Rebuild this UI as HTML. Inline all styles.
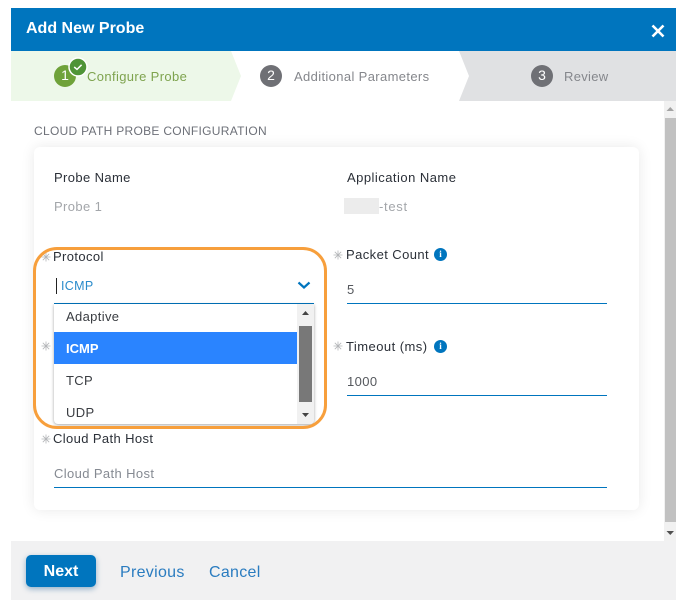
<!DOCTYPE html>
<html>
<head>
<meta charset="utf-8">
<style>
html,body{margin:0;padding:0;background:#fff;}
#p{position:relative;width:686px;height:607px;overflow:hidden;background:#fff;font-family:"Liberation Sans",sans-serif;font-size:13px;color:#2b3038;}
.a{position:absolute;white-space:nowrap;}
.t{position:absolute;white-space:nowrap;line-height:16px;letter-spacing:.38px;}
.ln{position:absolute;height:1px;background:#0075be;}
.circ{position:absolute;width:22px;height:22px;border-radius:50%;background:#6f7075;color:#fff;text-align:center;line-height:21px;font-size:14px;}
.star{position:absolute;width:10px;height:10px;}
.info{position:absolute;width:13px;height:13px;border-radius:50%;background:#0075be;color:#fff;font:bold 9px/13px "Liberation Serif",serif;text-align:center;}
.opt{position:absolute;left:12px;line-height:16px;letter-spacing:.35px;color:#3a3d42;}
</style>
</head>
<body>
<div id="p">
<div class="a" style="left:11px;top:8px;width:665px;height:43px;background:#0075be;"></div>
<div class="t" style="left:26px;top:20px;font-size:16px;line-height:18px;font-weight:bold;color:#fff;letter-spacing:0;">Add New Probe</div>
<svg class="a" style="left:651px;top:24px;" width="14" height="14" viewBox="0 0 14 14"><path d="M1.5 1.5L12.5 12.5M12.5 1.5L1.5 12.5" stroke="#fff" stroke-width="2.6" fill="none"/></svg>

<svg class="a" style="left:11px;top:51px;" width="665" height="50" viewBox="0 0 665 50">
<rect width="665" height="50" fill="#e0e1e3"/>
<polygon points="210,0 448,0 458,25 448,50 210,50 220,25" fill="#fff"/>
<polygon points="0,0 220,0 230,25 220,50 0,50" fill="#edf8e9"/>
</svg>
<div class="circ" style="left:54px;top:65px;background:#6fa23a;">1</div>
<svg class="a" style="left:68px;top:57px;" width="20" height="20" viewBox="0 0 20 20"><circle cx="10" cy="10" r="9" fill="#4f9437" stroke="#fff" stroke-width="1.5"/><path d="M6.2 10L9 12.4L13.6 7.8" stroke="#fff" stroke-width="1.5" fill="none"/></svg>
<div class="t" style="left:87px;top:69px;color:#7ea34e;letter-spacing:.37px;">Configure Probe</div>
<div class="circ" style="left:260px;top:65px;">2</div>
<div class="t" style="left:294px;top:69px;color:#85878c;letter-spacing:.36px;">Additional Parameters</div>
<div class="circ" style="left:531px;top:65px;">3</div>
<div class="t" style="left:564px;top:69px;color:#85878c;letter-spacing:.3px;">Review</div>

<div class="a" style="left:664px;top:101px;width:12px;height:440px;background:#f1f1f1;"></div>
<div class="a" style="left:665px;top:118px;width:11px;height:404px;background:#c1c1c1;"></div>
<svg class="a" style="left:665px;top:105px;" width="11" height="8"><polygon points="1.5,6 9,6 5.3,2" fill="#a3a3a3"/></svg>
<svg class="a" style="left:665px;top:529px;" width="11" height="8"><polygon points="1.5,2 9,2 5.3,6" fill="#505050"/></svg>

<div class="t" style="left:34px;top:123px;font-size:12px;color:#6d7078;letter-spacing:.3px;">CLOUD PATH PROBE CONFIGURATION</div>
<div class="a" style="left:34px;top:147px;width:605px;height:363px;background:#fff;border-radius:6px;box-shadow:0 0 14px rgba(0,0,0,.09);"></div>

<div class="t" style="left:54px;top:170px;">Probe Name</div>
<div class="t" style="left:347px;top:170px;letter-spacing:.47px;">Application Name</div>
<div class="t" style="left:54px;top:199px;color:#a3a6aa;">Probe 1</div>
<div class="a" style="left:344px;top:198px;width:35px;height:16px;background:#ececec;"></div>
<div class="t" style="left:379px;top:199px;color:#a3a6aa;letter-spacing:.7px;">-test</div>

<svg class="star" style="left:41px;top:252px;" viewBox="0 0 10 10"><path d="M5 .5V9.5M.5 5H9.5M1.8 1.8L8.2 8.2M8.2 1.8L1.8 8.2" stroke="#b4b6b9" stroke-width=".8" fill="none"/></svg>
<div class="t" style="left:53px;top:249px;">Protocol</div>
<div class="a" style="left:56px;top:278px;width:1px;height:16px;background:#222;"></div>
<div class="t" style="left:61px;top:278px;color:#2a8bcb;font-size:12.5px;letter-spacing:.3px;">ICMP</div>
<svg class="a" style="left:297px;top:281px;" width="14" height="9" viewBox="0 0 14 9"><path d="M1.5 1.5L7 6.5L12.5 1.5" stroke="#0075be" stroke-width="2.2" fill="none"/></svg>
<div class="ln" style="left:54px;top:303px;width:260px;"></div>

<svg class="star" style="left:333px;top:250px;" viewBox="0 0 10 10"><path d="M5 .5V9.5M.5 5H9.5M1.8 1.8L8.2 8.2M8.2 1.8L1.8 8.2" stroke="#b4b6b9" stroke-width=".8" fill="none"/></svg>
<div class="t" style="left:346px;top:247px;letter-spacing:.42px;">Packet Count</div>
<div class="info" style="left:434px;top:248px;">i</div>
<div class="t" style="left:347px;top:282px;color:#55585d;">5</div>
<div class="ln" style="left:347px;top:303px;width:260px;"></div>

<svg class="star" style="left:41px;top:341px;" viewBox="0 0 10 10"><path d="M5 .5V9.5M.5 5H9.5M1.8 1.8L8.2 8.2M8.2 1.8L1.8 8.2" stroke="#b4b6b9" stroke-width=".8" fill="none"/></svg>
<svg class="star" style="left:333px;top:341px;" viewBox="0 0 10 10"><path d="M5 .5V9.5M.5 5H9.5M1.8 1.8L8.2 8.2M8.2 1.8L1.8 8.2" stroke="#b4b6b9" stroke-width=".8" fill="none"/></svg>
<div class="t" style="left:346px;top:339px;letter-spacing:.45px;">Timeout (ms)</div>
<div class="info" style="left:434px;top:340px;">i</div>
<div class="t" style="left:347px;top:374px;color:#55585d;">1000</div>
<div class="ln" style="left:347px;top:395px;width:260px;"></div>

<svg class="star" style="left:41px;top:434px;" viewBox="0 0 10 10"><path d="M5 .5V9.5M.5 5H9.5M1.8 1.8L8.2 8.2M8.2 1.8L1.8 8.2" stroke="#b4b6b9" stroke-width=".8" fill="none"/></svg>
<div class="t" style="left:53px;top:431px;">Cloud Path Host</div>
<div class="t" style="left:54px;top:466px;color:#858a92;">Cloud Path Host</div>
<div class="ln" style="left:54px;top:487px;width:553px;"></div>

<div class="a" style="left:54px;top:304px;width:260px;height:120px;background:#fff;border-radius:0 0 4px 4px;box-shadow:0 1px 3px rgba(0,0,0,.35);overflow:hidden;">
  <div class="opt" style="top:5px;">Adaptive</div>
  <div class="a" style="left:0;top:28px;width:243px;height:32px;background:#2a84ff;"></div>
  <div class="opt" style="top:37px;color:#fff;font-weight:bold;letter-spacing:0;">ICMP</div>
  <div class="opt" style="top:69px;">TCP</div>
  <div class="opt" style="top:101px;">UDP</div>
  <div class="a" style="left:243px;top:0;width:17px;height:120px;background:#f1f1f1;"></div>
  <div class="a" style="left:245px;top:22px;width:13px;height:76px;background:#787878;"></div>
  <svg class="a" style="left:245px;top:5px;" width="13" height="8"><polygon points="3,6 10,6 6.5,2" fill="#444"/></svg>
  <svg class="a" style="left:245px;top:107px;" width="13" height="8"><polygon points="3,2 10,2 6.5,6" fill="#444"/></svg>
</div>
<div class="a" style="left:33px;top:247px;width:288px;height:176px;border:3px solid #f79f3c;border-radius:24px;"></div>

<div class="a" style="left:11px;top:541px;width:665px;height:59px;background:#f1f1f2;"></div>
<div class="a" style="left:26px;top:555px;width:70px;height:32px;background:#0075be;border-radius:5px;box-shadow:0 2px 6px rgba(0,80,140,.4);color:#fff;font-size:16px;font-weight:bold;line-height:34px;text-align:center;">Next</div>
<div class="t" style="left:120px;top:565px;font-size:16px;color:#2a7cc0;letter-spacing:.3px;">Previous</div>
<div class="t" style="left:209px;top:565px;font-size:16px;color:#2a7cc0;letter-spacing:.3px;">Cancel</div>
</div>
</body>
</html>
